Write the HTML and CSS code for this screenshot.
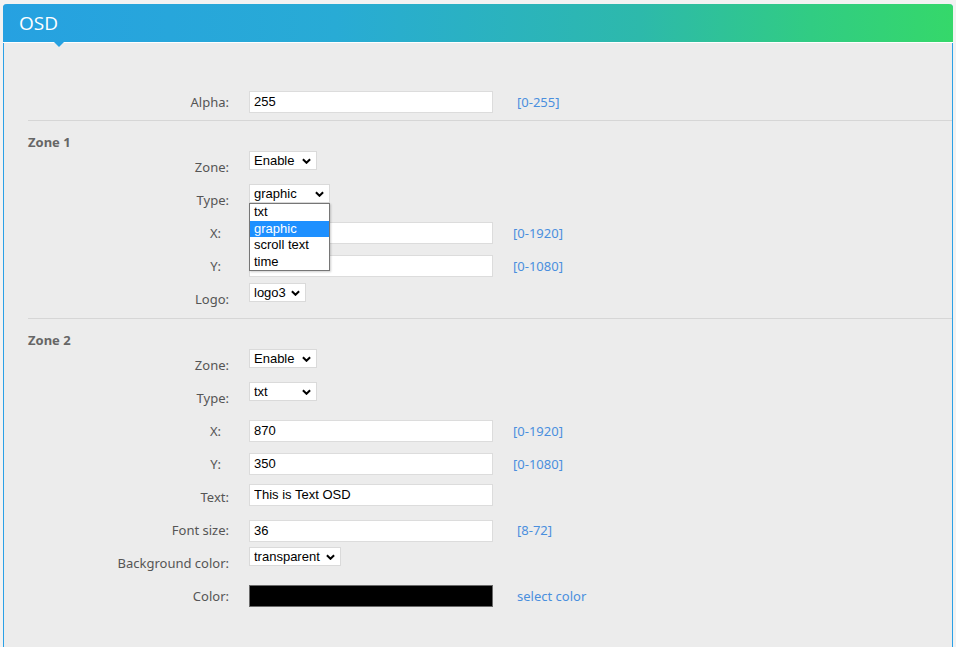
FILE: index.html
```html
<!DOCTYPE html>
<html>
<head>
<meta charset="utf-8">
<title>OSD</title>
<link rel="stylesheet" href="styles.css">
</head>
<body>
<div class="panel">
  <div class="head"><span class="title">OSD</span></div>
  <div class="content">
    <div class="row">
      <label class="lbl">Alpha:</label>
      <input class="txt" value="255">
      <span class="hint">[0-255]</span>
    </div>

    <div class="section">
      <div class="sec-title">Zone 1</div>
      <div class="row">
        <label class="lbl">Zone:</label>
        <span class="sel w68"><select><option>Enable</option></select><svg class="chev" viewBox="0 0 10 6"><path d="M1 1l4 4 4-4"/></svg></span>
      </div>
      <div class="row">
        <label class="lbl">Type:</label>
        <span class="sel w80"><select><option>graphic</option></select><svg class="chev" viewBox="0 0 10 6"><path d="M1 1l4 4 4-4"/></svg>
          <ul class="dropdown">
            <li>txt</li>
            <li class="active">graphic</li>
            <li>scroll text</li>
            <li>time</li>
          </ul>
        </span>
      </div>
      <div class="row">
        <label class="lbl short">X:</label>
        <input class="txt" value="">
        <span class="hint near">[0-1920]</span>
      </div>
      <div class="row">
        <label class="lbl short">Y:</label>
        <input class="txt" value="">
        <span class="hint near">[0-1080]</span>
      </div>
      <div class="row">
        <label class="lbl">Logo:</label>
        <span class="sel w57"><select><option>logo3</option></select><svg class="chev" viewBox="0 0 10 6"><path d="M1 1l4 4 4-4"/></svg></span>
      </div>
    </div>

    <div class="section second">
      <div class="sec-title">Zone 2</div>
      <div class="row">
        <label class="lbl">Zone:</label>
        <span class="sel w68"><select><option>Enable</option></select><svg class="chev" viewBox="0 0 10 6"><path d="M1 1l4 4 4-4"/></svg></span>
      </div>
      <div class="row">
        <label class="lbl">Type:</label>
        <span class="sel w68"><select><option>txt</option></select><svg class="chev" viewBox="0 0 10 6"><path d="M1 1l4 4 4-4"/></svg></span>
      </div>
      <div class="row">
        <label class="lbl short">X:</label>
        <input class="txt" value="870">
        <span class="hint near">[0-1920]</span>
      </div>
      <div class="row">
        <label class="lbl short">Y:</label>
        <input class="txt" value="350">
        <span class="hint near">[0-1080]</span>
      </div>
      <div class="row">
        <label class="lbl">Text:</label>
        <input class="txt raised" value="This is Text OSD">
      </div>
      <div class="row">
        <label class="lbl">Font size:</label>
        <input class="txt lowered" value="36">
        <span class="hint">[8-72]</span>
      </div>
      <div class="row">
        <label class="lbl">Background color:</label>
        <span class="sel w92"><select><option>transparent</option></select><svg class="chev" viewBox="0 0 10 6"><path d="M1 1l4 4 4-4"/></svg></span>
      </div>
      <div class="row">
        <label class="lbl">Color:</label>
        <span class="swatch"></span>
        <span class="hint">select color</span>
      </div>
    </div>
  </div>
</div>
</body>
</html>
```
FILE: styles.css
```css
html, body {
  margin: 0;
  padding: 0;
}
body {
  background: #f2f2f2;
  padding: 4px 3px 0 3px;
  font-family: "Noto Sans", "Open Sans", sans-serif;
  font-size: 13px;
  color: #555;
}
.panel {
  border: 1px solid #2ba0e6;
  border-top: none;
  border-radius: 4px 4px 0 0;
  background: #ececec;
}
.head {
  height: 38px;
  border-bottom: 1px solid #ffffff;
  border-radius: 4px 4px 0 0;
  margin: 0 -1px;
  background: linear-gradient(to right, #26a1e1 0%, #28abd5 35%, #2db9ab 67%, #31cc83 85%, #35d86a 100%);
  display: flex;
  align-items: center;
  padding-left: 16px;
}
.title {
  color: #fff;
  font-family: "Open Sans", "Noto Sans", sans-serif;
  font-size: 19px;
  line-height: 24px;
  position: relative;
}
.title::after {
  content: "";
  position: absolute;
  left: 34px;
  top: 30px;
  width: 0;
  height: 0;
  border-left: 6px solid transparent;
  border-right: 6px solid transparent;
  border-top: 6px solid #26a1e1;
}
.content {
  padding: 42px 0 40px 24px;
}
.row {
  display: flex;
  align-items: center;
  height: 33px;
}
.lbl {
  flex: 0 0 221px;
  box-sizing: border-box;
  padding-right: 20px;
  text-align: right;
  color: #555;
  line-height: 18px;
}
.lbl.short {
  padding-right: 28px;
}
.txt {
  box-sizing: border-box;
  width: 244px;
  height: 22px;
  margin: 0;
  border: 1px solid #dcdcdc;
  background: #fff;
  padding: 0 4px;
  font-family: "Liberation Sans", Arial, sans-serif;
  font-size: 13px;
  color: #000;
  outline: none;
}
.txt.raised {
  margin-bottom: 4px;
}
.txt.lowered {
  margin-top: 2px;
}
.hint {
  margin-left: 24px;
  color: #4a8fde;
}
.hint.near {
  margin-left: 20px;
}
.swatch {
  box-sizing: border-box;
  width: 244px;
  height: 22px;
  background: #000;
  border: 1px solid #6a6a6a;
}
.sel {
  position: relative;
  display: inline-flex;
  margin-bottom: 12px;
  height: 19px;
}
.sel select {
  -webkit-appearance: none;
  appearance: none;
  box-sizing: border-box;
  width: 100%;
  height: 19px;
  margin: 0;
  border: 1px solid #dadada;
  border-radius: 0;
  background: #fff;
  padding: 0 0 0 4px;
  font-family: "Liberation Sans", Arial, sans-serif;
  font-size: 13px;
  line-height: 17px;
  color: #000;
  outline: none;
}
.w68 { width: 68px; }
.w80 { width: 81px; }
.w57 { width: 57px; }
.w92 { width: 92px; }
.chev {
  position: absolute;
  right: 6px;
  top: 7px;
  width: 9px;
  height: 6px;
  fill: none;
  stroke: #000;
  stroke-width: 2.2;
  pointer-events: none;
}
.section {
  border-top: 1px solid #d6d6d6;
  margin-top: 2px;
}
.section.second {
  margin-top: 3px;
}
.sec-title {
  padding-top: 14px;
  line-height: 15px;
  font-weight: bold;
  color: #666;
}
.dropdown {
  position: absolute;
  left: 0;
  top: 19px;
  width: 81px;
  box-sizing: border-box;
  margin: 0;
  padding: 0;
  list-style: none;
  background: #fff;
  border: 1px solid #767676;
  box-shadow: 1px 1px 2px rgba(0,0,0,0.2);
  z-index: 5;
  font-family: "Liberation Sans", Arial, sans-serif;
  font-size: 13px;
  color: #000;
}
.dropdown li {
  height: 16.5px;
  line-height: 16.5px;
  padding-left: 4px;
  white-space: nowrap;
}
.dropdown li.active {
  background: #1e90ff;
  color: #fff;
}
```
